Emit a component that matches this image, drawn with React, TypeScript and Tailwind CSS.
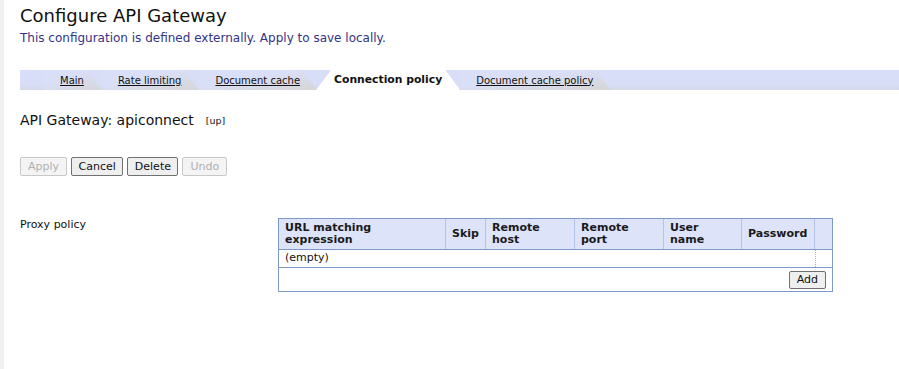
import React from 'react';

const tabs = [
  { label: 'Main', active: false },
  { label: 'Rate limiting', active: false },
  { label: 'Document cache', active: false },
  { label: 'Connection policy', active: true },
  { label: 'Document cache policy', active: false },
];

const columns = [
  { label: ['URL matching', 'expression'], w: 'w-[167px]' },
  { label: ['Skip'], w: 'w-[40px]' },
  { label: ['Remote', 'host'], w: 'w-[89px]' },
  { label: ['Remote', 'port'], w: 'w-[89px]' },
  { label: ['User', 'name'], w: 'w-[78px]' },
  { label: ['Password'], w: 'w-[73px]' },
];

function Btn({ children, disabled }: { children: React.ReactNode; disabled?: boolean }) {
  return (
    <button
      className={
        disabled
          ? 'h-[19px] rounded-[2px] border border-[#c8c8c8] bg-[#f4f4f4] px-[7px] text-[11px] leading-none text-[#b0b0b0]'
          : 'h-[19px] rounded-[2px] border border-[#707070] bg-[#efefef] px-[6.5px] text-[11px] leading-none text-[#111]'
      }
    >
      {children}
    </button>
  );
}

export default function App() {
  return (
    <div className="flex min-h-[369px] bg-white font-['DejaVu_Sans',Verdana,sans-serif] text-[#111]">
      <div className="w-[4px] shrink-0 bg-[#f0f0f0]" />
      <div className="flex-1 pl-[16px]">
        <h1 className="mt-[5px] text-[18px] leading-[22px] text-[#111]">Configure API Gateway</h1>
        <p className="mt-[4px] text-[12px] leading-[15px] text-[#333388]">
          This configuration is defined externally. Apply to save locally.
        </p>

        <div className="mt-[24px] flex h-[20px] bg-gradient-to-b from-[#d9def8] from-70% to-[#d6d9ea] pl-[23px] text-[10px]">
          {tabs.map((t) =>
            t.active ? (
              <div
                key={t.label}
                className="-mx-[1px] flex h-full items-center bg-white px-[18px] text-[10.8px] font-bold [clip-path:polygon(15px_0,calc(100%-15px)_0,100%_100%,0_100%)]"
              >
                {t.label}
              </div>
            ) : (
              <div
                key={t.label}
                className="flex h-full items-center bg-gradient-to-br from-[#d9dff7] from-40% to-[#d6d6d6] px-[17px] [clip-path:polygon(0_0,calc(100%-14px)_0,100%_100%,0_100%)]"
              >
                <span className="underline">{t.label}</span>
              </div>
            )
          )}
        </div>

        <div className="mt-[19px] flex items-center text-[14px] leading-[18px]">
          API Gateway: apiconnect
          <span className="ml-[12px] mt-[3px] text-[9.5px]">[up]</span>
        </div>

        <div className="mt-[27px] flex gap-[4px]">
          <Btn disabled>Apply</Btn>
          <Btn>Cancel</Btn>
          <Btn>Delete</Btn>
          <Btn disabled>Undo</Btn>
        </div>

        <div className="mt-[42px] flex">
          <div className="w-[258px] pt-[1px] text-[11px] leading-[12px]">Proxy policy</div>
          <div className="w-[555px] border border-[#7d9ac4]">
            <div className="flex h-[31px] border-b border-[#7d9ac4] bg-[#dde3f8] text-[11px] font-bold leading-[12px] text-[#1a1a1a]">
              {columns.map((c) => (
                <div
                  key={c.label.join(' ')}
                  className={`${c.w} flex shrink-0 flex-col justify-center border-r border-[#b5c4e6] px-[6px]`}
                >
                  {c.label.map((l) => (
                    <span key={l}>{l}</span>
                  ))}
                </div>
              ))}
              <div className="flex-1" />
            </div>
            <div className="flex h-[18px] border-b border-[#7d9ac4] text-[11px]">
              <div className="flex w-[536px] items-center px-[6px]">(empty)</div>
              <div className="flex-1 border-l border-dotted border-[#9ab0d6]" />
            </div>
            <div className="flex h-[23px] items-center justify-end pr-[6px]">
              <button className="h-[18px] rounded-[2px] border border-[#707070] bg-[#efefef] px-[7px] text-[11px] leading-none">
                Add
              </button>
            </div>
          </div>
        </div>
      </div>
    </div>
  );
}
